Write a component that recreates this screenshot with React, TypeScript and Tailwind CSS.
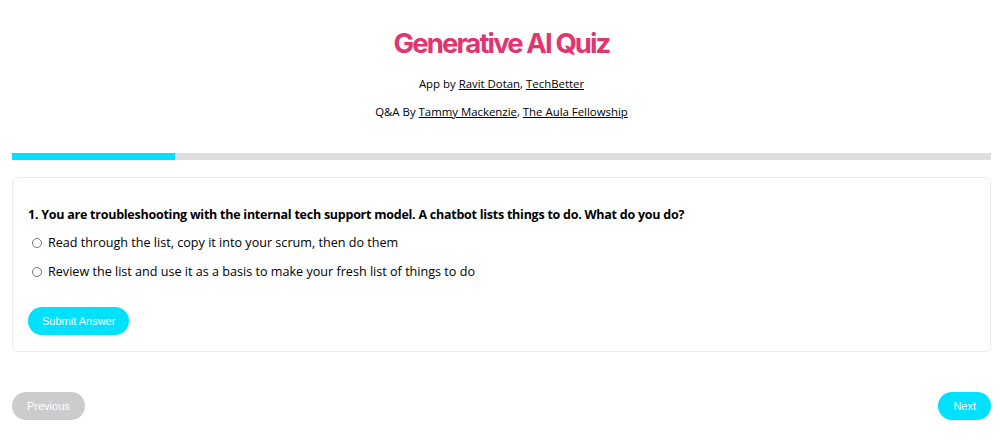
export default function App() {
  const options = [
    "Read through the list, copy it into your scrum, then do them",
    "Review the list and use it as a basis to make your fresh list of things to do",
  ];

  return (
    <div className="min-h-[446px] bg-white pl-3 pr-[9px] text-black font-['Open_Sans',sans-serif]">
      {/* Header */}
      <div className="pt-[25px] text-center">
        <h1 className="text-[27.5px] leading-[36px] font-bold text-[#e0356f] font-['Inter',sans-serif] tracking-[-1.9px]">
          Generative AI Quiz
        </h1>
        <p className="mt-[14px] text-[11.4px] leading-[18px]">
          App by <a className="underline">Ravit Dotan</a>, <a className="underline">TechBetter</a>
        </p>
        <p className="mt-[10px] text-[11.4px] leading-[18px]">
          Q&amp;A By <a className="underline">Tammy Mackenzie</a>, <a className="underline">The Aula Fellowship</a>
        </p>
      </div>

      {/* Progress */}
      <div className="mt-[32px] h-[7px] w-full bg-[#dddddd]">
        <div className="h-full bg-[#00e1ff]" style={{ width: `${100 / 6}%` }} />
      </div>

      {/* Question card */}
      <div className="mt-[17px] rounded-md border border-[#ececec] px-[15px] pt-[28px] pb-4">
        <h2 className="text-[12.5px] leading-[18px] font-bold tracking-[-0.25px]">
          1. You are troubleshooting with the internal tech support model. A chatbot lists things to do. What do you do?
        </h2>
        <div className="mt-[10px] space-y-[11px] pl-1">
          {options.map((o) => (
            <label key={o} className="flex items-center gap-[6px] text-[12.6px] leading-[18px]">
              <input type="radio" name="q1" className="m-0 h-[10px] w-[10px]" />
              <span>{o}</span>
            </label>
          ))}
        </div>
        <button className="mt-[26px] h-[28px] rounded-full bg-[#00e1ff] px-[14px] text-[11px] text-white font-['Liberation_Sans',Arial,sans-serif]">
          Submit Answer
        </button>
      </div>

      {/* Nav */}
      <div className="mt-[40px] flex justify-between">
        <button className="h-[28px] rounded-full bg-[#cccccc] px-[15px] text-[11px] text-white font-['Liberation_Sans',Arial,sans-serif]">
          Previous
        </button>
        <button className="h-[28px] rounded-full bg-[#00e1ff] px-[15px] text-[11px] text-white font-['Liberation_Sans',Arial,sans-serif]">
          Next
        </button>
      </div>
    </div>
  );
}
